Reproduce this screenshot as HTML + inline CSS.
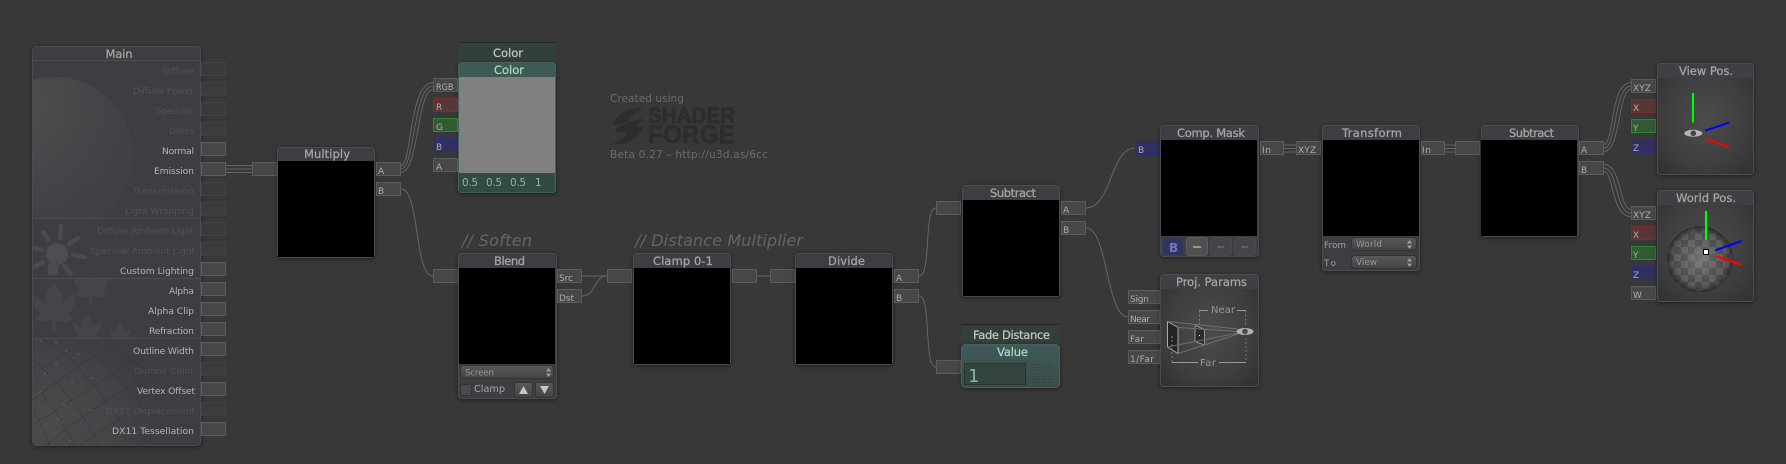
<!DOCTYPE html>
<html><head><meta charset="utf-8"><style>
html,body{margin:0;padding:0;background:#383838;width:1786px;height:464px;overflow:hidden}
svg{display:block;font-family:"DejaVu Sans","Liberation Sans",sans-serif}
.n{fill:#3c3e42;stroke:#4a4c50;stroke-width:1}
.sh{filter:drop-shadow(0 1px 2px rgba(0,0,0,.45))}
.t{font-size:11.5px;color:#a6a6a6;fill:currentColor;stroke:currentColor;stroke-width:.25}
.l{font-size:9.2px;fill:#b4b4b4}
.d{font-size:9.2px;fill:#505254}
.p{fill:#474747;stroke:#5c5c5c}
.q{fill:#3b3b3b;stroke:#424242}
.pt{font-size:9px;fill:#aeaeae}
.w{fill:none;stroke:#656565;stroke-width:1}
.c{font-style:italic;font-size:16px;fill:#656565}
.dd{fill:url(#dd);stroke:#333}
.ddt{font-size:8.8px;fill:#989898}
.ar{fill:#a0a0a0}
</style></head><body>
<svg width="1786" height="464" viewBox="0 0 1786 464" xmlns="http://www.w3.org/2000/svg">
<defs>
<linearGradient id="dd" x1="0" y1="0" x2="0" y2="1"><stop offset="0" stop-color="#595959"/><stop offset="1" stop-color="#434343"/></linearGradient>
<linearGradient id="tv" x1="0" y1="0" x2="0" y2="1"><stop offset="0" stop-color="#41595a"/><stop offset="1" stop-color="#394d49"/></linearGradient>
<radialGradient id="rg" cx=".5" cy=".5" r=".72"><stop offset="0" stop-color="#4c4c4c"/><stop offset=".6" stop-color="#3e3e3e"/><stop offset="1" stop-color="#2f2f2f"/></radialGradient>
<radialGradient id="sp" cx=".22" cy=".18" r=".95"><stop offset="0" stop-color="#4e4f51"/><stop offset=".7" stop-color="#424346"/><stop offset="1" stop-color="#3e4043"/></radialGradient>
<radialGradient id="ms" cx=".1" cy=".8" r=".95"><stop offset="0" stop-color="#4a4b4d"/><stop offset=".7" stop-color="#424346"/><stop offset="1" stop-color="#3c3e41" stop-opacity="0"/></radialGradient>
<radialGradient id="bl" cx=".5" cy=".5" r=".5"><stop offset="0" stop-color="#a0a0a0" stop-opacity=".5"/><stop offset=".75" stop-color="#555" stop-opacity=".3"/><stop offset="1" stop-color="#1c1c1c" stop-opacity=".7"/></radialGradient>
<pattern id="ck" width="14" height="14" patternUnits="userSpaceOnUse" x="1667" y="226"><rect width="14" height="14" fill="#626262"/><rect width="7" height="7" fill="#484848"/><rect x="7" y="7" width="7" height="7" fill="#484848"/></pattern>
<clipPath id="c1"><rect x="33" y="61" width="168" height="157"/></clipPath>
<clipPath id="c2"><rect x="33" y="219" width="168" height="59"/></clipPath>
<clipPath id="c3"><rect x="33" y="279" width="168" height="59"/></clipPath>
<clipPath id="c4"><path d="M33 339H201V442a4 4 0 0 1-4 4H37a4 4 0 0 1-4-4Z"/></clipPath>
<path id="leaf" d="M0 -26C5 -18 10 -16 8 -6L22 -14C22 -6 20 0 14 6L20 10C12 16 6 14 2 12L2 22L-2 22L-2 12C-6 14 -12 16 -20 10L-14 6C-20 0 -22 -6 -22 -14L-8 -6C-10 -16 -5 -18 0 -26Z"/>
</defs>
<rect width="1786" height="464" fill="#383838"/>

<!-- wires -->
<g class="w">
<path d="M226 165.5H252M226 169H252M226 172.5H252"/>
<path d="M401 165.5C412 165 409 82.5 433 82.5M401 169C415 169 413 86 433 86M401 172.5C419 172 417 89.5 433 89.5"/>
<path d="M401 189C420 189 414 276 433 276"/>
<path d="M582 276H607M582 296C596 296 594 276 607 276"/>
<path d="M757 276H770"/>
<path d="M919 276C932 276 923 208 936 208"/>
<path d="M919 296C932 296 923 367 936 367"/>
<path d="M1086 208C1112 208 1110 148 1135 148"/>
<path d="M1086 228C1108 228 1106 317 1128 317"/>
<path d="M1284 145H1296M1284 148.5H1296M1284 152H1296"/>
<path d="M1445 145H1455M1445 148.5H1455M1445 152H1455"/>
<path d="M1604 144.5C1614 144 1610 82.5 1631 82.5M1604 148C1617 148 1614 86 1631 86M1604 151.500C1621 151 1618 89.5 1631 89.5"/>
<path d="M1604 164.5C1622 165 1619 209.500 1631 209.500M1604 168C1618 168 1615 213 1631 213M1604 171.500C1614 172 1611 216.500 1631 216.500"/>
</g>

<!-- Main -->
<g class="sh"><rect class="n" x="32.500" y="46.500" width="168" height="399" rx="4"/></g>
<g clip-path="url(#c1)"><circle cx="55" cy="155" r="78" fill="url(#sp)"/></g>
<g clip-path="url(#c2)" stroke="#4b4c4f" stroke-width="4" stroke-linecap="round" fill="none">
<path d="M61 226L60 238M43 232L48 240M78 238L69 244M34 248L42 250M85 257L73 255M34 267L43 262M71 274L64 266"/>
<circle cx="57" cy="254" r="11" fill="#4d4e51" stroke="none"/><rect x="48" y="262" width="10" height="13" rx="3" fill="#4b4c4f" stroke="none"/>
</g>
<g clip-path="url(#c3)" fill="#434548">
<use href="#leaf" transform="translate(54 308) scale(1)"/><use href="#leaf" transform="translate(91 286) scale(.8)"/><use href="#leaf" transform="translate(87 331) scale(.65)"/><use href="#leaf" transform="translate(120 336) scale(.5)"/>
</g>
<g clip-path="url(#c4)">
<rect x="33" y="339" width="120" height="107" fill="url(#ms)"/>
<g fill="none" stroke="#36373a" stroke-width=".7" stroke-opacity=".75">
<path d="M33 360Q70 390 100 446M33 385Q55 405 75 446M33 410Q42 425 50 446M50 340Q95 380 125 430M75 340Q115 370 145 410M105 342Q135 360 160 385"/>
<path d="M33 400Q70 370 110 345M33 425Q80 395 135 360M45 446Q95 405 150 375M80 446Q115 420 150 400M33 375Q60 355 85 342"/>
</g>
<g fill="#808183"><circle cx="41" cy="341" r=".6"/><circle cx="56" cy="343" r=".6"/><circle cx="66" cy="351" r=".6"/><circle cx="78" cy="354" r=".6"/><circle cx="45" cy="374" r=".6"/><circle cx="56" cy="364" r=".6"/><circle cx="72" cy="382" r=".6"/><circle cx="40" cy="392" r=".6"/><circle cx="64" cy="405" r=".6"/><circle cx="92" cy="378" r=".6"/><circle cx="48" cy="424" r=".6"/><circle cx="70" cy="441" r=".6"/><circle cx="58" cy="419" r=".6"/><circle cx="90" cy="410" r=".6"/></g>
</g>
<path d="M33 60.500H200M33 218.500H200M33 278.500H200M33 338.500H200" stroke="#4b4d50" stroke-width="1"/>
<text class="t" x="105.500" y="58" textLength="27">Main</text>
<g>
<rect class="q" x="201.500" y="62.500" width="24" height="13"/><rect class="q" x="201.500" y="82.500" width="24" height="13"/><rect class="q" x="201.500" y="102.500" width="24" height="13"/><rect class="q" x="201.500" y="122.500" width="24" height="13"/>
<rect class="p" x="201.500" y="142.500" width="24" height="13"/><rect class="p" x="201.500" y="162.500" width="24" height="13"/>
<rect class="q" x="201.500" y="182.500" width="24" height="13"/><rect class="q" x="201.500" y="202.500" width="24" height="13"/><rect class="q" x="201.500" y="222.500" width="24" height="13"/><rect class="q" x="201.500" y="242.500" width="24" height="13"/>
<rect class="p" x="201.500" y="262.500" width="24" height="13"/><rect class="p" x="201.500" y="282.500" width="24" height="13"/><rect class="p" x="201.500" y="302.500" width="24" height="13"/><rect class="p" x="201.500" y="322.500" width="24" height="13"/><rect class="p" x="201.500" y="342.500" width="24" height="13"/>
<rect class="q" x="201.500" y="362.500" width="24" height="13"/><rect class="p" x="201.500" y="382.500" width="24" height="13"/><rect class="q" x="201.500" y="402.500" width="24" height="13"/><rect class="p" x="201.500" y="422.500" width="24" height="13"/>
</g>
<text class="d" x="163" y="74" textLength="31">Diffuse</text>
<text class="d" x="133" y="94" textLength="61">Diffuse Power</text>
<text class="d" x="156" y="114" textLength="38">Specular</text>
<text class="d" x="169" y="134" textLength="25">Gloss</text>
<text class="l" x="162" y="154" textLength="32">Normal</text>
<text class="l" x="154" y="174" textLength="40">Emission</text>
<text class="d" x="133" y="194" textLength="61">Transmission</text>
<text class="d" x="125" y="214" textLength="69">Light Wrapping</text>
<text class="d" x="97" y="234" textLength="97">Diffuse Ambient Light</text>
<text class="d" x="90" y="254" textLength="105">Specular Ambient Light</text>
<text class="l" x="120" y="274" textLength="74">Custom Lighting</text>
<text class="l" x="169" y="294" textLength="25">Alpha</text>
<text class="l" x="148" y="314" textLength="46">Alpha Clip</text>
<text class="l" x="149" y="334" textLength="45">Refraction</text>
<text class="l" x="133" y="354" textLength="61">Outline Width</text>
<text class="d" x="134" y="374" textLength="60">Outline Color</text>
<text class="l" x="137" y="394" textLength="58">Vertex Offset</text>
<text class="d" x="106" y="414" textLength="89">DX11 Displacement</text>
<text class="l" x="112" y="434" textLength="82">DX11 Tessellation</text>

<!-- Multiply -->
<rect class="p" x="252.500" y="162.500" width="24" height="13"/>
<g class="sh"><rect class="n" x="277.500" y="147.500" width="97" height="110" rx="3"/></g>
<rect x="278" y="161" width="96" height="96" fill="#000"/>
<text class="t" x="304" y="158" textLength="46">Multiply</text>
<rect class="p" x="376.500" y="162.500" width="24" height="13"/><text class="pt" x="378" y="174">A</text>
<rect class="p" x="376.500" y="182.500" width="24" height="13"/><text class="pt" x="378" y="194">B</text>

<!-- Color -->
<rect x="458" y="42" width="97" height="21" fill="#333f39"/><path d="M458 42.500H555" stroke="#1f2722"/>
<text class="t" x="493" y="57" textLength="30" style="color:#c4c4c4">Color</text>
<g class="sh"><rect x="458.500" y="62.500" width="97" height="130" rx="3" fill="#394d48" stroke="#46605a"/></g>
<rect x="459" y="63" width="96" height="14" fill="#3f5a55"/>
<text class="t" x="494" y="74" textLength="30" style="color:#a2dcc4">Color</text>
<rect x="459" y="77" width="96" height="96" fill="#808080"/>
<rect x="459" y="174" width="23" height="18" fill="#334a41"/><rect x="483" y="174" width="23" height="18" fill="#334a41"/><rect x="507" y="174" width="23" height="18" fill="#334a41"/><rect x="531" y="174" width="23" height="18" fill="#334a41"/>
<g font-size="10.500" fill="#8fb5a3"><text x="462" y="186" textLength="16">0.5</text><text x="486" y="186" textLength="16">0.5</text><text x="510" y="186" textLength="16">0.5</text><text x="535" y="186">1</text></g>
<rect class="p" x="433.500" y="78.500" width="24" height="13"/><text class="pt" x="436" y="90" textLength="17.500" lengthAdjust="spacingAndGlyphs">RGB</text>
<rect x="433.500" y="98.500" width="24" height="13" fill="#5a3535" stroke="#7a2f2f"/><text class="pt" x="436" y="110">R</text>
<rect x="433.500" y="118.500" width="24" height="13" fill="#2f5a32" stroke="#2c8a2c"/><text class="pt" x="436" y="130">G</text>
<rect x="433.500" y="138.500" width="24" height="13" fill="#30305f" stroke="#2d2d80"/><text class="pt" x="436" y="150">B</text>
<rect class="p" x="433.500" y="158.500" width="24" height="13"/><text class="pt" x="436" y="170">A</text>

<!-- Created using -->
<text x="610" y="102" font-size="10.600" fill="#6c6c6c" textLength="74">Created using</text>
<g fill="#2d2d2d">
<path d="M612 125C620 110 632 107 643 109C636 112 630 116 628 120C624 125 618 124 612 125Z"/>
<path d="M644 126C636 142 624 146 612 143C620 141 626 136 628 132C632 127 638 128 644 126Z"/>
<path d="M614 131C622 122 634 122 643 118C638 126 632 132 626 132C622 133 618 132 614 131Z"/>
</g>
<text x="648" y="123" font-family="Liberation Sans" font-size="22.500" font-weight="bold" fill="#2d2d2d" stroke="#2d2d2d" stroke-width=".7" textLength="87" lengthAdjust="spacingAndGlyphs">SHADER</text>
<text x="648" y="143" font-family="Liberation Sans" font-size="25" font-weight="bold" fill="#2d2d2d" stroke="#2d2d2d" stroke-width=".7" textLength="87" lengthAdjust="spacingAndGlyphs">FORGE</text>
<text x="610" y="158" font-size="10.600" fill="#6c6c6c" textLength="158">Beta 0.27 – http://u3d.as/6cc</text>

<!-- Blend -->
<text class="c" x="462" y="246" textLength="70">// Soften</text>
<rect class="p" x="433.500" y="269.500" width="24" height="13"/>
<g class="sh"><rect class="n" x="458.500" y="253.500" width="98" height="145" rx="3"/></g>
<rect x="459" y="268" width="96" height="96" fill="#000"/>
<text class="t" x="494" y="265" textLength="31">Blend</text>
<rect class="dd" x="460.500" y="365.500" width="93" height="13" rx="3"/>
<text class="ddt" x="465" y="375.500" textLength="29">Screen</text>
<path class="ar" d="M546 371.500L548.500 368L551 371.500ZM546 373.500L551 373.500L548.500 377Z"/>
<rect x="460.500" y="384.500" width="11" height="11" rx="2" fill="#4a4a4a" stroke="#333"/>
<text x="474" y="392" font-size="9.700" fill="#a8a8a8" textLength="31">Clamp</text>
<rect class="dd" x="514.500" y="382.500" width="18" height="15" rx="2"/><path d="M519 394L523.500 386L528 394Z" fill="#c4c4c4"/>
<rect class="dd" x="535.500" y="382.500" width="18" height="15" rx="2"/><path d="M540 386L549 386L544.500 394Z" fill="#c4c4c4"/>
<rect class="p" x="557.500" y="269.500" width="24" height="13"/><text class="pt" x="559" y="281" textLength="14">Src</text>
<rect class="p" x="557.500" y="289.500" width="24" height="13"/><text class="pt" x="559" y="301" textLength="15">Dst</text>

<!-- Clamp -->
<text class="c" x="635" y="246" textLength="168">// Distance Multiplier</text>
<rect class="p" x="607.500" y="269.500" width="24" height="13"/>
<g class="sh"><rect class="n" x="633.500" y="253.500" width="97" height="111" rx="3"/></g>
<rect x="634" y="268" width="96" height="96" fill="#000"/>
<text class="t" x="653" y="265" textLength="60">Clamp 0-1</text>
<rect class="p" x="732.500" y="269.500" width="24" height="13"/>

<!-- Divide -->
<rect class="p" x="770.500" y="269.500" width="24" height="13"/>
<g class="sh"><rect class="n" x="795.500" y="253.500" width="97" height="111" rx="3"/></g>
<rect x="796" y="268" width="96" height="96" fill="#000"/>
<text class="t" x="828" y="265" textLength="37">Divide</text>
<rect class="p" x="894.500" y="269.500" width="24" height="13"/><text class="pt" x="896" y="281">A</text>
<rect class="p" x="894.500" y="289.500" width="24" height="13"/><text class="pt" x="896" y="301">B</text>

<!-- Subtract 1 -->
<rect class="p" x="936.500" y="201.500" width="24" height="13"/>
<g class="sh"><rect class="n" x="962.500" y="185.500" width="97" height="111" rx="3"/></g>
<rect x="963" y="200" width="96" height="96" fill="#000"/>
<text class="t" x="990" y="197" textLength="46">Subtract</text>
<rect class="p" x="1061.500" y="201.500" width="24" height="13"/><text class="pt" x="1063" y="213">A</text>
<rect class="p" x="1061.500" y="221.500" width="24" height="13"/><text class="pt" x="1063" y="233">B</text>

<!-- Fade Distance -->
<rect x="962" y="324" width="97" height="21" fill="#333f39"/><path d="M962 324.500H1059" stroke="#1f2722"/>
<text class="t" x="973" y="339" textLength="77" style="color:#c4c4c4">Fade Distance</text>
<rect class="p" x="936.500" y="360.500" width="24" height="13"/>
<g class="sh"><rect x="961.500" y="344.500" width="98" height="43" rx="4" fill="url(#tv)" stroke="#46605a"/></g>
<text class="t" x="997" y="356" textLength="31" style="color:#a2dcc4">Value</text>
<rect x="964.500" y="363.500" width="61" height="21" fill="#33453d" stroke="#263530"/>
<text x="968" y="382" font-size="18px" fill="#7fb89c">1</text>
<g fill="#2f423c"><path d="M1033 364h1v1h-1zM1036 364h1v1h-1zM1039 364h1v1h-1zM1042 364h1v1h-1zM1045 364h1v1h-1zM1048 364h1v1h-1zM1051 364h1v1h-1zM1033 367h1v1h-1zM1036 367h1v1h-1zM1039 367h1v1h-1zM1042 367h1v1h-1zM1045 367h1v1h-1zM1048 367h1v1h-1zM1051 367h1v1h-1zM1033 370h1v1h-1zM1036 370h1v1h-1zM1039 370h1v1h-1zM1042 370h1v1h-1zM1045 370h1v1h-1zM1048 370h1v1h-1zM1051 370h1v1h-1zM1033 373h1v1h-1zM1036 373h1v1h-1zM1039 373h1v1h-1zM1042 373h1v1h-1zM1045 373h1v1h-1zM1048 373h1v1h-1zM1051 373h1v1h-1zM1033 376h1v1h-1zM1036 376h1v1h-1zM1039 376h1v1h-1zM1042 376h1v1h-1zM1045 376h1v1h-1zM1048 376h1v1h-1zM1051 376h1v1h-1zM1033 379h1v1h-1zM1036 379h1v1h-1zM1039 379h1v1h-1zM1042 379h1v1h-1zM1045 379h1v1h-1zM1048 379h1v1h-1zM1051 379h1v1h-1zM1033 382h1v1h-1zM1036 382h1v1h-1zM1039 382h1v1h-1zM1042 382h1v1h-1zM1045 382h1v1h-1zM1048 382h1v1h-1zM1051 382h1v1h-1z"/></g>

<!-- Comp. Mask -->
<rect x="1135.500" y="141.500" width="24" height="13" fill="#30305f" stroke="#2d2d80"/><text class="pt" x="1138" y="153">B</text>
<g class="sh"><rect class="n" x="1160.500" y="125.500" width="98" height="131" rx="3"/></g>
<rect x="1161" y="140" width="96" height="96" fill="#000"/>
<text class="t" x="1177" y="137" textLength="68">Comp. Mask</text>
<rect x="1162.500" y="237.500" width="21" height="18" rx="3" fill="#33345a" stroke="#3a3c62"/><text x="1169" y="252" font-size="12px" font-weight="bold" fill="#7474c4">B</text>
<rect x="1186.500" y="237.500" width="21" height="18" rx="3" fill="#505050" stroke="#5d5d5d"/><path d="M1193 247h8" stroke="#b0b0b0" stroke-width="1.500"/>
<rect x="1210.500" y="237.500" width="21" height="18" rx="3" fill="#434548" stroke="#494b4e"/><path d="M1217 247h7" stroke="#7c7c7c"/>
<rect x="1234.500" y="237.500" width="21" height="18" rx="3" fill="#434548" stroke="#494b4e"/><path d="M1241 247h7" stroke="#7c7c7c"/>
<rect class="p" x="1260.500" y="141.500" width="23" height="13"/><text class="pt" x="1262" y="153" textLength="9">In</text>

<!-- Proj Params -->
<rect class="p" x="1128.500" y="290.500" width="31" height="13"/><text class="pt" x="1130" y="302" textLength="19">Sign</text>
<rect class="p" x="1128.500" y="310.500" width="31" height="13"/><text class="pt" x="1130" y="322" textLength="20">Near</text>
<rect class="p" x="1128.500" y="330.500" width="31" height="13"/><text class="pt" x="1130" y="342" textLength="14">Far</text>
<rect class="p" x="1128.500" y="350.500" width="31" height="13"/><text class="pt" x="1130" y="362" textLength="24">1/Far</text>
<g class="sh"><rect x="1160.500" y="274.500" width="98" height="112" rx="3" fill="url(#rg)" stroke="#4a4c50"/></g>
<path d="M1161 289v-11a3 3 0 0 1 3-3h91a3 3 0 0 1 3 3v11Z" fill="#3e4044"/>
<text class="t" x="1176" y="286" textLength="71">Proj. Params</text>
<g fill="none" stroke-linejoin="round">
<path d="M1167.500 321.500L1178 327.500V353.500L1167.500 347Z" fill="#232323" stroke="#a8a8a8"/>
<path d="M1195 325.500L1204.500 329.500V345L1195 341.500Z" stroke="#a8a8a8" fill="#2b2b2b" stroke-opacity=".8"/>
<path d="M1167.500 321.500L1238 329M1178 327.500L1238 331.500M1178 353.500L1238 334M1167.500 347L1238 333" stroke="#6f6f6f"/>
<path d="M1199.500 310.500V327M1245.500 310.500V326M1172 340V362M1246 338V362" stroke="#7a7a7a" stroke-dasharray="2 2"/>
<path d="M1199 310.500H1208M1237 310.500H1246M1172 362.500H1198M1219 362.500H1246" stroke="#999"/>
</g>
<rect x="1171.500" y="336.500" width="1" height="1" fill="#fff"/><rect x="1199" y="335" width="1" height="1" fill="#fff"/>
<text x="1211" y="313" font-size="10px" fill="#999" textLength="24">Near</text>
<text x="1200" y="366" font-size="10px" fill="#999" textLength="16">Far</text>
<ellipse cx="1245" cy="331.500" rx="8.500" ry="3.500" fill="#b0b0b0"/><circle cx="1245" cy="331.500" r="2.800" fill="#4a4a4a"/>

<!-- Transform -->
<rect class="p" x="1296.500" y="141.500" width="24" height="13"/><text class="pt" x="1298" y="153" textLength="18">XYZ</text>
<g class="sh"><rect class="n" x="1322.500" y="125.500" width="97" height="145" rx="3"/></g>
<rect x="1323" y="140" width="96" height="96" fill="#000"/>
<text class="t" x="1342" y="137" textLength="60">Transform</text>
<text class="ddt" x="1324" y="248" textLength="22" style="fill:#a0a0a0">From</text>
<text class="ddt" x="1324" y="266" textLength="12" style="fill:#a0a0a0">To</text>
<rect class="dd" x="1351.500" y="237.500" width="65" height="13" rx="3"/><text class="ddt" x="1356" y="247" textLength="26">World</text>
<path class="ar" d="M1407 243.500L1409.500 240L1412 243.500ZM1407 245.500L1412 245.500L1409.500 249Z"/>
<rect class="dd" x="1351.500" y="255.500" width="65" height="13" rx="3"/><text class="ddt" x="1356" y="265" textLength="21">View</text>
<path class="ar" d="M1407 261.500L1409.500 258L1412 261.500ZM1407 263.500L1412 263.500L1409.500 267Z"/>
<rect class="p" x="1421.500" y="141.500" width="23" height="13"/><text class="pt" x="1422" y="153" textLength="9">In</text>

<!-- Subtract 2 -->
<rect class="p" x="1455.500" y="141.500" width="24" height="13"/>
<g class="sh"><rect class="n" x="1481.500" y="125.500" width="97" height="111" rx="3"/></g>
<rect x="1481" y="140" width="96" height="96" fill="#000"/>
<text class="t" x="1509" y="137" textLength="45">Subtract</text>
<rect class="p" x="1579.500" y="141.500" width="24" height="13"/><text class="pt" x="1581" y="153">A</text>
<rect class="p" x="1579.500" y="161.500" width="24" height="13"/><text class="pt" x="1581" y="173">B</text>

<!-- View Pos -->
<rect class="p" x="1631.500" y="79.500" width="24" height="13"/><text class="pt" x="1633" y="91" textLength="18" lengthAdjust="spacingAndGlyphs">XYZ</text>
<rect x="1631.500" y="99.500" width="24" height="13" fill="#5a3535" stroke="#7a2f2f"/><text class="pt" x="1633" y="111">X</text>
<rect x="1631.500" y="119.500" width="24" height="13" fill="#2f5a32" stroke="#2c8a2c"/><text class="pt" x="1633" y="131">Y</text>
<rect x="1631.500" y="139.500" width="24" height="13" fill="#30305f" stroke="#2d2d80"/><text class="pt" x="1633" y="151">Z</text>
<g class="sh"><rect x="1657.500" y="63.500" width="96" height="111" rx="3" fill="url(#rg)" stroke="#4a4c50"/></g>
<path d="M1658 78v-11a3 3 0 0 1 3-3h89a3 3 0 0 1 3 3v11Z" fill="#3e4044"/>
<text class="t" x="1679" y="75" textLength="54">View Pos.</text>
<path d="M1693 93V122.500" stroke="#0f0" stroke-width="2"/>
<path d="M1705 130.700L1729 122.700" stroke="#00f" stroke-width="2"/>
<path d="M1705 138.700L1729 147" stroke="#f00" stroke-width="2"/>
<ellipse cx="1693.300" cy="133.300" rx="9" ry="3.500" fill="#b4b4b4"/><circle cx="1693.300" cy="133.300" r="2.800" fill="#444"/>

<!-- World Pos -->
<rect class="p" x="1631.500" y="206.500" width="24" height="13"/><text class="pt" x="1633" y="218" textLength="18" lengthAdjust="spacingAndGlyphs">XYZ</text>
<rect x="1631.500" y="226.500" width="24" height="13" fill="#5a3535" stroke="#7a2f2f"/><text class="pt" x="1633" y="238">X</text>
<rect x="1631.500" y="246.500" width="24" height="13" fill="#2f5a32" stroke="#2c8a2c"/><text class="pt" x="1633" y="258">Y</text>
<rect x="1631.500" y="266.500" width="24" height="13" fill="#30305f" stroke="#2d2d80"/><text class="pt" x="1633" y="278">Z</text>
<rect class="p" x="1631.500" y="286.500" width="24" height="13"/><text class="pt" x="1633" y="298">W</text>
<g class="sh"><rect x="1657.500" y="190.500" width="96" height="111" rx="3" fill="url(#rg)" stroke="#4a4c50"/></g>
<path d="M1658 205v-11a3 3 0 0 1 3-3h89a3 3 0 0 1 3 3v11Z" fill="#3e4044"/>
<text class="t" x="1676" y="202" textLength="60">World Pos.</text>
<circle cx="1700" cy="259.300" r="33" fill="url(#ck)"/><circle cx="1700" cy="259.300" r="33" fill="url(#bl)"/>
<path d="M1706 211V240" stroke="#0f0" stroke-width="2"/>
<path d="M1715.300 250.300L1741.700 241" stroke="#00f" stroke-width="2"/>
<path d="M1715.300 256L1741.700 265" stroke="#f00" stroke-width="2"/>
<rect x="1703.500" y="249.500" width="5" height="5" fill="#fff" stroke="#000"/>
</svg>
</body></html>
